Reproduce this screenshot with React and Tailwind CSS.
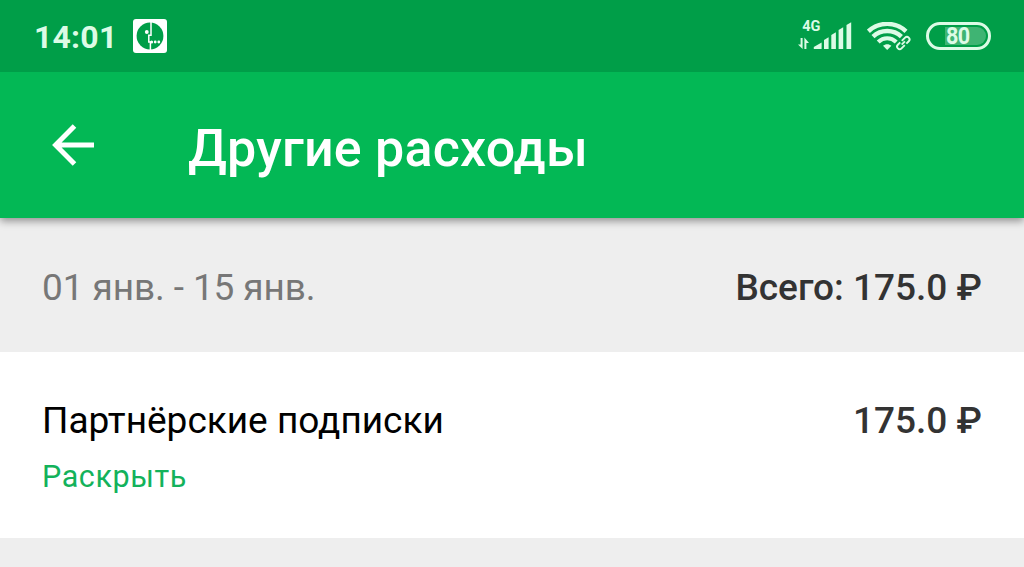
import { clsx } from 'clsx';

const expenses = [{ id: 1, name: 'Партнёрские подписки', amount: '175.0 ₽' }];

function AppBadge() {
  return (
    <svg className="w-[34px] h-[34px]" viewBox="0 0 34 34" fill="none">
      <rect width="34" height="34" rx="3" fill="#fff" />
      <circle cx="17" cy="17" r="13.4" fill="#009e48" />
      <path d="M18 2.5V16.3H15.8V23H17.4V31.5" stroke="#fff" strokeWidth="1.5" />
      <circle cx="13.8" cy="13" r="1.9" fill="#fff" />
      <circle cx="18.6" cy="23" r="1.5" fill="#fff" />
      <circle cx="22.2" cy="23" r="1.4" fill="#fff" />
      <circle cx="25.8" cy="23" r="1.4" fill="#fff" />
    </svg>
  );
}

/* Mobile network: type label, data arrows and signal bars */
function SignalIcon() {
  return (
    <svg className="w-[56px] h-[34px]" viewBox="0 0 56 34" fill="#dcfbe6">
      <text x="5.2" y="12" fontSize="14.5" fontWeight="700" fontFamily="Roboto, sans-serif">4G</text>
      <path d="M3.6 19H5.6V30L1 25.5H3.6Z" />
      <path d="M7.4 30H9.4V24H12L7.4 18.5Z" />
      <path d="M16.8 30V28L24.6 23.5V30Z" />
      <path d="M27 30V21L31.6 18.2V30Z" />
      <path d="M34.3 30V16L38.9 13.3V30Z" />
      <path d="M41.6 30V11L46.2 8.3V30Z" />
      <path d="M49.5 30V6L54.2 3.3V30Z" />
    </svg>
  );
}

function WifiIcon() {
  return (
    <svg className="w-[45px] h-[30px]" viewBox="0 0 45 30" fill="none" stroke="#dcfbe6">
      <path d="M1.4 9.3C12 -.6 28.4 -.6 39 9.3" strokeWidth="4.4" />
      <path d="M6 14.6C13.8 7.2 26.6 7.2 34.4 14.6" strokeWidth="4.4" />
      <path d="M11.2 20C16.5 15 23.9 15 29.2 20" strokeWidth="4.2" />
      <path d="M16 23.8C18.2 21.6 22.2 21.6 24.4 23.8L20.2 28Z" fill="#dcfbe6" stroke="none" />
      <g strokeWidth="1.9" transform="rotate(-45 36.3 21)">
        <path d="M36.8 18.4H41.4a2.6 2.6 0 0 1 0 5.2H38" />
        <path d="M35.8 23.6H31.2a2.6 2.6 0 0 1 0-5.2H34.6" />
        <path d="M34 21H38.6" />
      </g>
    </svg>
  );
}

function Battery({ level }) {
  return (
    <div className="relative h-[28px] w-[65px] rounded-full border-3 border-[#dcfbe6] p-[2px]">
      <div className="h-full overflow-hidden rounded-full">
        <div className="ml-auto h-full bg-[#3fb473]" style={{ width: `${level - 5}%` }} />
      </div>
      <span className="absolute left-[17px] top-[-3px] origin-left scale-x-90 text-[24px] font-bold leading-[28px] tracking-[-0.6px] text-[#dcfbe6]">
        {level}
      </span>
    </div>
  );
}

function StatusBar() {
  return (
    <div className="relative z-10 flex h-[72px] items-center bg-[#009e48] pl-[34px] pr-[33px]">
      <span className="w-[99px] pt-[2px] text-[32px] font-bold leading-none tracking-[0.2px] text-[#dcfbe6]">14:01</span>
      <AppBadge />
      <div className="ml-auto flex items-center">
        <SignalIcon />
        <div className="ml-[14px] mr-[14px] pt-[2px]">
          <WifiIcon />
        </div>
        <Battery level={80} />
      </div>
    </div>
  );
}

function Header({ title }) {
  return (
    <header className="relative flex h-[146px] items-center bg-[#03b855] pl-[52px] shadow-[0_3px_8px_rgba(0,0,0,0.4)]">
      <button className="w-[136px]" aria-label="Назад">
        <svg className="w-[43px] h-[42px]" viewBox="0 0 43 42" fill="none" stroke="#fff" strokeWidth="5">
          <path d="M22.5 2L3.6 21L22.5 40M3 21H42" />
        </svg>
      </button>
      <h1 className="pt-[7px] text-[52px] font-medium leading-none tracking-[0.2px] text-white">{title}</h1>
    </header>
  );
}

function Amount({ children, className }) {
  return <span className={clsx('font-medium text-[#333]', className)}>{children}</span>;
}

export default function App() {
  return (
    <div className="h-[567px] overflow-hidden bg-[#eee] font-['Roboto',sans-serif]">
      <StatusBar />
      <Header title="Другие расходы" />

      {/* Period total */}
      <div className="flex h-[134px] items-center justify-between px-[42px] pt-[5px] text-[37px] leading-none">
        <span className="tracking-[-0.1px] text-[#777]">01 янв. - 15 янв.</span>
        <Amount>Всего: 175.0 ₽</Amount>
      </div>

      {expenses.map((item) => (
        <div key={item.id} className="h-[186px] bg-white px-[42px] pt-[50px]">
          <div className="flex justify-between text-[37px] leading-[38px]">
            <span className="text-black">{item.name}</span>
            <Amount>{item.amount}</Amount>
          </div>
          <button className="mt-[21px] block text-[30.5px] leading-[32px] tracking-[0.6px] text-[#13b25b]">Раскрыть</button>
        </div>
      ))}
    </div>
  );
}
